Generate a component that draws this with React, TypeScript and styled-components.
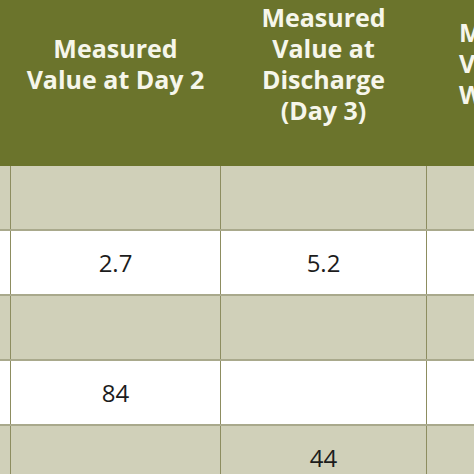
import React from "react";
import styled, { createGlobalStyle } from "styled-components";

const Global = createGlobalStyle`
  html, body { margin: 0; padding: 0; background: #ffffff; overflow: hidden; }
  body { width: 474px; height: 474px; }
`;

const cols = "10px 1px 209px 1px 205px 1px 1fr";

const Table = styled.div`
  width: 474px;
  height: 474px;
  overflow: hidden;
  display: flex;
  flex-direction: column;
  font-family: "Open Sans", "Noto Sans", sans-serif;
`;

const HeaderRow = styled.div`
  display: grid;
  grid-template-columns: ${cols};
  height: 166px;
  flex: none;
  background: #6b742c;
`;

const HeadCell = styled.div<{ $edge?: boolean }>`
  display: flex;
  align-items: center;
  justify-content: ${(p) => (p.$edge ? "flex-start" : "center")};
  padding-left: ${(p) => (p.$edge ? "32px" : "0")};
  text-align: ${(p) => (p.$edge ? "left" : "center")};
  padding-bottom: 39px;
  color: #f6f6ea;
  font-weight: 700;
  font-size: 25px;
  line-height: 31px;
  white-space: nowrap;
`;

const HeadText = styled.div``;

const HeadGap = styled.div``;

const BodyRow = styled.div<{ $shade: boolean }>`
  display: grid;
  grid-template-columns: ${cols};
  height: 63px;
  flex: none;
  background: ${(p) => (p.$shade ? "#d0d0b9" : "#ffffff")};
  border-bottom: 2px solid #a9a98c;
`;

const Cell = styled.div`
  display: flex;
  align-items: center;
  justify-content: center;
  font-size: 24px;
  color: #1c1c1c;
`;

const VLine = styled.div`
  background: #8d8d60;
`;

const rows: { shade: boolean; a: string; b: string }[] = [
  { shade: true, a: "", b: "" },
  { shade: false, a: "2.7", b: "5.2" },
  { shade: true, a: "", b: "" },
  { shade: false, a: "84", b: "" },
  { shade: true, a: "", b: "44" },
];

export default function App() {
  return (
    <>
      <Global />
      <Table>
        <HeaderRow>
          <HeadCell />
          <HeadGap />
          <HeadCell>
            <HeadText>
              Measured
              <br />
              Value at Day 2
            </HeadText>
          </HeadCell>
          <HeadGap />
          <HeadCell>
            <HeadText>
              Measured
              <br />
              Value at
              <br />
              Discharge
              <br />
              (Day 3)
            </HeadText>
          </HeadCell>
          <HeadGap />
          <HeadCell $edge>
            <HeadText>
              Measured
              <br />
              Value after
              <br />
              Week 1 Visit
            </HeadText>
          </HeadCell>
        </HeaderRow>
        {rows.map((r, i) => (
          <BodyRow key={i} $shade={r.shade}>
            <Cell />
            <VLine />
            <Cell>{r.a}</Cell>
            <VLine />
            <Cell>{r.b}</Cell>
            <VLine />
            <Cell />
          </BodyRow>
        ))}
      </Table>
    </>
  );
}
